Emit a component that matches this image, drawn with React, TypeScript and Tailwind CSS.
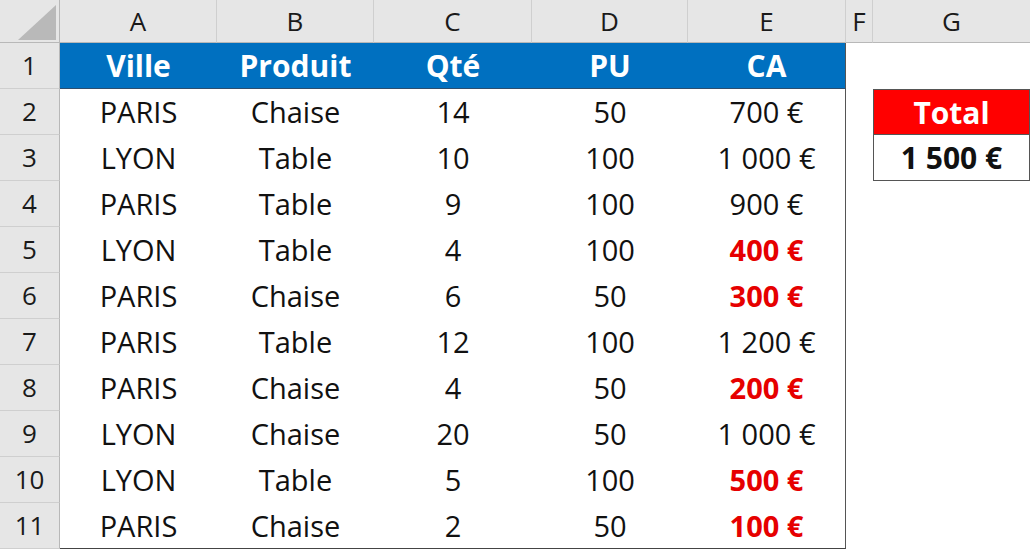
import React from "react";

const rows: { v: string; p: string; q: string; pu: string; ca: string; red?: boolean }[] = [
  { v: "PARIS", p: "Chaise", q: "14", pu: "50", ca: "700 €" },
  { v: "LYON", p: "Table", q: "10", pu: "100", ca: "1 000 €" },
  { v: "PARIS", p: "Table", q: "9", pu: "100", ca: "900 €" },
  { v: "LYON", p: "Table", q: "4", pu: "100", ca: "400 €", red: true },
  { v: "PARIS", p: "Chaise", q: "6", pu: "50", ca: "300 €", red: true },
  { v: "PARIS", p: "Table", q: "12", pu: "100", ca: "1 200 €" },
  { v: "PARIS", p: "Chaise", q: "4", pu: "50", ca: "200 €", red: true },
  { v: "LYON", p: "Chaise", q: "20", pu: "50", ca: "1 000 €" },
  { v: "LYON", p: "Table", q: "5", pu: "100", ca: "500 €", red: true },
  { v: "PARIS", p: "Chaise", q: "2", pu: "50", ca: "100 €", red: true },
];

const colLetters = ["A", "B", "C", "D", "E", "F", "G"];

export default function App() {
  return (
    <div
      className="w-[1030px] h-[550px] bg-white overflow-hidden text-[#111]"
      style={{ fontFamily: '"Open Sans", "Noto Sans", sans-serif' }}
    >
      <div className="grid grid-cols-[60px_157px_157px_158px_156px_158px_27px_157px] grid-rows-[43px_repeat(11,46px)]">
        {/* corner */}
        <div className="relative bg-[#e6e6e6] border-r border-b border-[#b8b8b8]">
          <svg className="absolute left-[18px] top-[5px]" width="38" height="35" viewBox="0 0 38 35">
            <polygon points="38,0 38,35 0,35" fill="#b9b9b9" />
          </svg>
        </div>
        {colLetters.map((c, i) => (
          <div
            key={c}
            className={`flex items-center justify-center bg-[#e6e6e6] border-b border-[#b8b8b8] text-[26px] text-[#1a1a1a] ${
              i < 6 ? "border-r border-r-[#cfcfcf]" : ""
            }`}
          >
            {c}
          </div>
        ))}

        {/* row 1 */}
        <div className="flex items-center justify-center bg-[#e6e6e6] border-r border-b border-r-[#b8b8b8] border-b-[#cfcfcf] text-[26px] text-[#1a1a1a]">
          1
        </div>
        {["Ville", "Produit", "Qté", "PU", "CA"].map((h, i) => (
          <div
            key={h}
            className={`flex items-center justify-center bg-[#0070c0] text-white font-bold text-[30px] border-b border-b-[#2d4e6e] ${
              i === 4 ? "border-r border-r-[#555]" : ""
            }`}
          >
            {h}
          </div>
        ))}
        <div />
        <div />

        {rows.map((r, idx) => {
          const n = idx + 2;
          const last = idx === rows.length - 1;
          const bb = last ? "border-b border-b-[#444]" : "";
          return (
            <React.Fragment key={n}>
              <div className="flex items-center justify-center bg-[#e6e6e6] border-r border-b border-r-[#b8b8b8] border-b-[#cfcfcf] text-[26px] text-[#1a1a1a]">
                {n}
              </div>
              <div className={`flex items-center justify-center text-[29px] ${bb}`}>{r.v}</div>
              <div className={`flex items-center justify-center text-[29px] ${bb}`}>{r.p}</div>
              <div className={`flex items-center justify-center text-[29px] ${bb}`}>{r.q}</div>
              <div className={`flex items-center justify-center text-[29px] ${bb}`}>{r.pu}</div>
              <div
                className={`flex items-center justify-center text-[29px] border-r border-r-[#555] ${bb} ${
                  r.red ? "text-[#e60000] font-bold" : ""
                }`}
              >
                {r.ca}
              </div>
              <div />
              {n === 2 ? (
                <div className="flex items-center justify-center bg-[#ff0000] text-white font-bold text-[30px] border border-[#555]">
                  Total
                </div>
              ) : n === 3 ? (
                <div className="flex items-center justify-center bg-white text-[#111] font-bold text-[30px] border border-t-0 border-[#555]">
                  1 500 €
                </div>
              ) : (
                <div />
              )}
            </React.Fragment>
          );
        })}
      </div>
    </div>
  );
}
